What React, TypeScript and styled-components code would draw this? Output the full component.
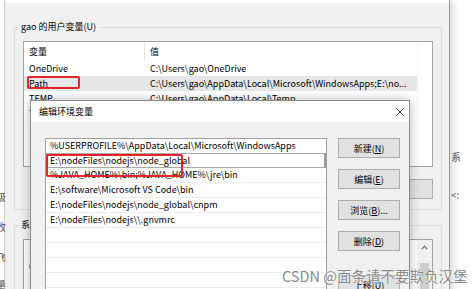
import React from 'react';
import styled, { createGlobalStyle } from 'styled-components';

const UI = `"Noto Sans CJK SC", "Noto Sans", sans-serif`;

const Global = createGlobalStyle`
  html, body { margin: 0; padding: 0; background: #fff; }
  body { font-family: ${UI}; }
  * { box-sizing: border-box; }
`;

const Desktop = styled.div`
  position: relative;
  width: 474px;
  height: 289px;
  overflow: hidden;
  background: #fff;
  font-family: ${UI};
  font-size: 9px;
  color: #000;
`;

/* ---------- background window: 环境变量 ---------- */
const BgWindow = styled.div`
  position: absolute;
  left: 4px;
  top: 0;
  width: 446px;
  height: 320px;
  padding: 21px 7px 0 9px;
  background: linear-gradient(#ffffff 0 3px, #f0f0f0 3px);
  border-left: 1px solid #cfcfcf;
  border-right: 1px solid #9a9a9a;
  box-shadow: 3px 0 8px rgba(0, 0, 0, 0.16);
`;

const Group = styled.fieldset<{ $mt?: number; $pb?: number }>`
  margin: ${p => p.$mt ?? 0}px 0 0 0;
  padding: 8px 8px ${p => p.$pb ?? 10}px 8px;
  border: 1px solid #dcdcdc;
  min-width: 0;
`;

const Legend = styled.legend`
  font-size: 9px;
  line-height: 12px;
  padding: 0 2px;
  margin-left: -4px;
  color: #000;
`;

const VarList = styled.div<{ $h: number }>`
  width: 100%;
  height: ${p => p.$h}px;
  background: #fff;
  border: 1px solid #a3a3a3;
  display: grid;
  grid-template-columns: 1fr 15px;
  overflow: hidden;
`;

const VarTable = styled.div`
  display: flex;
  flex-direction: column;
`;

const HeaderRow = styled.div`
  display: grid;
  grid-template-columns: 121px 1fr;
  height: 19px;
  align-items: center;
`;

const HeaderCell = styled.div<{ $divider?: boolean }>`
  height: 100%;
  display: flex;
  align-items: center;
  padding-left: 5px;
  border-right: ${p => (p.$divider ? '1px solid #e5e5e5' : 'none')};
`;

const VarRow = styled.div<{ $selected?: boolean }>`
  display: grid;
  grid-template-columns: 121px 1fr;
  height: 15px;
  align-items: center;
  background: ${p => (p.$selected ? '#e6e6e6' : 'transparent')};
`;

const Cell = styled.div<{ $pl: number }>`
  padding-left: ${p => p.$pl}px;
  white-space: nowrap;
  overflow: hidden;
  line-height: 15px;
`;

const ScrollGap = styled.div`
  border-left: 1px solid #f3f3f3;
`;

const ScrollBar = styled.div`
  background: #f0f0f0;
  display: flex;
  flex-direction: column;
  align-items: center;
`;

const ScrollArrow = styled.div`
  height: 15px;
  width: 100%;
  display: flex;
  align-items: center;
  justify-content: center;
`;

const ScrollThumb = styled.div`
  margin-top: 8px;
  width: 9px;
  flex: 1;
  background: #cdcdcd;
`;

const ButtonRow = styled.div`
  margin-top: 12px;
  display: flex;
  justify-content: flex-end;
  gap: 8px;
`;

const WinButton = styled.button<{ $w?: number; $mt?: number }>`
  width: ${p => p.$w ?? 62}px;
  height: 20px;
  margin: ${p => p.$mt ?? 0}px 0 0 0;
  padding: 0;
  background: #e1e1e1;
  border: 1px solid #adadad;
  font-family: ${UI};
  font-size: 9px;
  color: #000;
  display: flex;
  align-items: center;
  justify-content: center;
  flex-shrink: 0;
`;

const Acc = styled.span`
  text-decoration: underline;
`;

/* ---------- front dialog: 编辑环境变量 ---------- */
const Dialog = styled.div`
  position: absolute;
  left: 30px;
  top: 100px;
  width: 380px;
  height: 210px;
  background: #f0f0f0;
  border: 1px solid #8c8c8c;
  box-shadow: 0 0 10px rgba(0, 0, 0, 0.28);
  display: flex;
  flex-direction: column;
`;

const TitleBar = styled.div`
  height: 21px;
  background: #fff;
  display: flex;
  align-items: center;
  justify-content: space-between;
  padding: 0 5px 0 8px;
  font-size: 9px;
`;

const DialogBody = styled.div`
  flex: 1;
  display: flex;
  gap: 11px;
  padding: 16px 8px 0 14px;
`;

const PathList = styled.div`
  width: 282px;
  background: #fff;
  border: 1px solid #a0a0a0;
  display: flex;
  flex-direction: column;
`;

const PathRow = styled.div<{ $editing?: boolean }>`
  height: 15px;
  line-height: 14px;
  padding-left: 4px;
  white-space: nowrap;
  border-bottom: 1px solid ${p => (p.$editing ? '#a8a8a8' : '#ededed')};
  ${p =>
    p.$editing
      ? `border-top: 1px solid #a8a8a8; border-left: 1px solid #a8a8a8; border-right: 2px solid #9a9a9a; margin-top: -1px; height: 15px; line-height: 13px; padding-left: 3px;`
      : ''}
`;

const ButtonCol = styled.div`
  display: flex;
  flex-direction: column;
  gap: 11px;
`;

/* ---------- overlays ---------- */
const RedMark = styled.div<{ $x: number; $y: number; $w: number; $h: number }>`
  position: absolute;
  left: ${p => p.$x}px;
  top: ${p => p.$y}px;
  width: ${p => p.$w}px;
  height: ${p => p.$h}px;
  border: 2px solid #e3252b;
  border-radius: 2px;
`;

const Watermark = styled.div`
  position: absolute;
  left: 282px;
  top: 266px;
  font-family: ${UI};
  font-size: 14.5px;
  line-height: 20px;
  color: #8a8a8a;
  white-space: nowrap;
  text-shadow: 0 0 1px #fff, 0 0 1px #fff;
`;

const EdgeFragments = styled.div<{ $x: number; $y: number; $w: number }>`
  position: absolute;
  left: ${p => p.$x}px;
  top: ${p => p.$y}px;
  width: ${p => p.$w}px;
  overflow: hidden;
  display: flex;
  flex-direction: column;
  font-size: 10px;
  color: #5a5a5a;
`;

const Fragment = styled.div<{ $h: number; $ml: number }>`
  height: ${p => p.$h}px;
  line-height: ${p => p.$h}px;
  margin-left: ${p => p.$ml}px;
  white-space: nowrap;
`;

const CloseIcon = () => (
  <svg width="8" height="8" viewBox="0 0 8 8">
    <path d="M0.5 0.5 L7.5 7.5 M7.5 0.5 L0.5 7.5" stroke="#222" strokeWidth="0.9" fill="none" />
  </svg>
);

const UpChevron = () => (
  <svg width="7" height="5" viewBox="0 0 7 5">
    <path d="M0.8 4.2 L3.5 1.2 L6.2 4.2" stroke="#606060" strokeWidth="1.1" fill="none" />
  </svg>
);

const userVars = [
  { name: 'OneDrive', value: 'C:\\Users\\gao\\OneDrive' },
  { name: 'Path', value: 'C:\\Users\\gao\\AppData\\Local\\Microsoft\\WindowsApps;E:\\no...', selected: true },
  { name: 'TEMP', value: 'C:\\Users\\gao\\AppData\\Local\\Temp' },
  { name: 'TMP', value: 'C:\\Users\\gao\\AppData\\Local\\Temp' },
];

const paths = [
  '%USERPROFILE%\\AppData\\Local\\Microsoft\\WindowsApps',
  'E:\\nodeFiles\\nodejs\\node_global',
  '%JAVA_HOME%\\bin;%JAVA_HOME%\\jre\\bin',
  'E:\\software\\Microsoft VS Code\\bin',
  'E:\\nodeFiles\\nodejs\\node_global\\cnpm',
  'E:\\nodeFiles\\nodejs\\\\.gnvmrc',
  '',
  '',
  '',
  '',
];

export default function App() {
  return (
    <Desktop>
      <Global />
      <BgWindow>
        <Group $pb={10}>
          <Legend>gao 的用户变量(U)</Legend>
          <VarList $h={126}>
            <VarTable>
              <HeaderRow>
                <HeaderCell $divider>变量</HeaderCell>
                <HeaderCell>值</HeaderCell>
              </HeaderRow>
              {userVars.map(v => (
                <VarRow key={v.name} $selected={v.selected}>
                  <Cell $pl={5}>{v.name}</Cell>
                  <Cell $pl={5}>{v.value}</Cell>
                </VarRow>
              ))}
            </VarTable>
            <ScrollGap />
          </VarList>
          <ButtonRow>
            <WinButton $w={75}>
              新建(<Acc>N</Acc>)...
            </WinButton>
            <WinButton $w={75}>
              编辑(<Acc>E</Acc>)...
            </WinButton>
            <WinButton $w={75}>
              删除(<Acc>D</Acc>)
            </WinButton>
          </ButtonRow>
        </Group>
        <Group $mt={9}>
          <Legend>系统变量(S)</Legend>
          <VarList $h={120}>
            <VarTable>
              <HeaderRow>
                <HeaderCell $divider>变量</HeaderCell>
                <HeaderCell>值</HeaderCell>
              </HeaderRow>
              <VarRow>
                <Cell $pl={5}>ComSpec</Cell>
                <Cell $pl={5}>C:\Windows\system32\cmd.exe</Cell>
              </VarRow>
            </VarTable>
            <ScrollBar>
              <ScrollArrow>
                <UpChevron />
              </ScrollArrow>
              <ScrollThumb />
            </ScrollBar>
          </VarList>
        </Group>
      </BgWindow>

      <EdgeFragments $x={0} $y={182} $w={7}>
        <Fragment $h={30} $ml={-4}>级</Fragment>
        <Fragment $h={30} $ml={-4}>改</Fragment>
        <Fragment $h={30} $ml={-4}>飞</Fragment>
        <Fragment $h={26} $ml={-4}>量</Fragment>
      </EdgeFragments>
      <EdgeFragments $x={451} $y={150} $w={14}>
        <Fragment $h={14} $ml={0}>系</Fragment>
        <Fragment $h={24} $ml={0} />
        <Fragment $h={14} $ml={0}>&lt;:</Fragment>
      </EdgeFragments>

      <Dialog>
        <TitleBar>
          <span>编辑环境变量</span>
          <CloseIcon />
        </TitleBar>
        <DialogBody>
          <PathList>
            {paths.map((p, i) => (
              <PathRow key={i} $editing={i === 1}>
                {p}
              </PathRow>
            ))}
          </PathList>
          <ButtonCol>
            <WinButton>
              新建(<Acc>N</Acc>)
            </WinButton>
            <WinButton>
              编辑(<Acc>E</Acc>)
            </WinButton>
            <WinButton>
              浏览(<Acc>B</Acc>)...
            </WinButton>
            <WinButton>
              删除(<Acc>D</Acc>)
            </WinButton>
            <WinButton $mt={13}>
              上移(<Acc>U</Acc>)
            </WinButton>
          </ButtonCol>
        </DialogBody>
      </Dialog>

      <RedMark $x={27} $y={76} $w={53} $h={13} />
      <RedMark $x={46} $y={154} $w={137} $h={23} />
      <Watermark>CSDN @面条请不要欺负汉堡</Watermark>
    </Desktop>
  );
}
